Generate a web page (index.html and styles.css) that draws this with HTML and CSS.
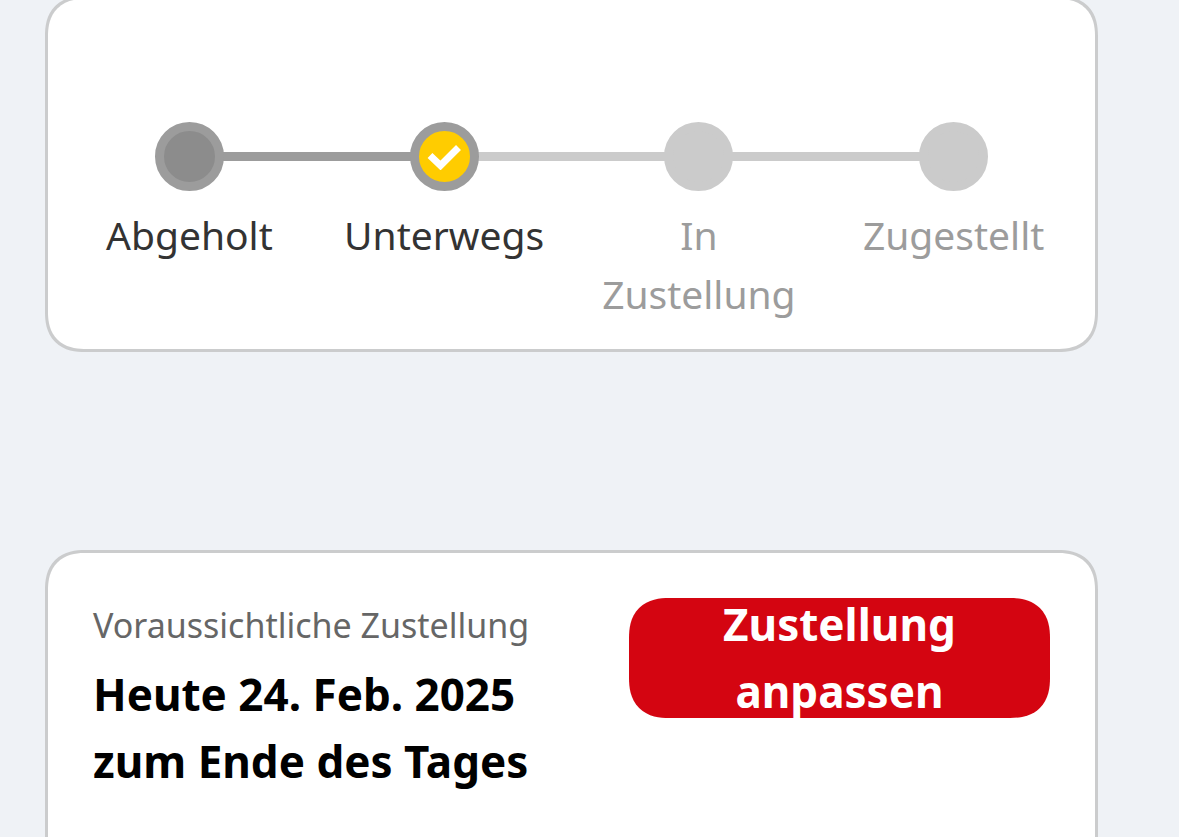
FILE: index.html
```html
<!DOCTYPE html>
<html lang="de">

<head>
  <meta charset="UTF-8">
  <meta name="viewport" content="width=device-width, initial-scale=1.0">
  <title>Sendungsverfolgung</title>
  <link rel="stylesheet" href="styles.css">
</head>

<body>
  <main class="page">
    <section class="card status">
      <ol class="steps">
        <li class="step done">
          <span class="dot"></span>
          <span class="label">Abgeholt</span>
        </li>
        <li class="step current" aria-current="step">
          <span class="dot">
            <svg class="check" viewBox="0 0 34 26" aria-hidden="true">
              <path d="M3 11.5 L13.5 21.5 L31.5 3.5" />
            </svg>
          </span>
          <span class="label">Unterwegs</span>
        </li>
        <li class="step">
          <span class="dot"></span>
          <span class="label">In Zustellung</span>
        </li>
        <li class="step">
          <span class="dot"></span>
          <span class="label">Zugestellt</span>
        </li>
      </ol>
    </section>

    <section class="card delivery">
      <div class="info">
        <p class="caption">Voraussichtliche Zustellung</p>
        <p class="date">Heute 24. Feb. 2025<br>zum Ende des Tages</p>
      </div>
      <button type="button" class="btn">Zustellung anpassen</button>
    </section>
  </main>
</body>

</html>
```

FILE: styles.css
```css
* {
  box-sizing: border-box;
  margin: 0;
  padding: 0;
}

body {
  background-color: #eff2f6;
  font-family: "Noto Sans", "Open Sans", sans-serif;
  overflow-x: hidden;
}

.page {
  display: flex;
  flex-direction: column;
  gap: 198px;
  height: 100vh;
  padding: 0 81px 0 45px;
  overflow: hidden;
}

.card {
  background-color: #fff;
  border: 3px solid #cbcccd;
  border-radius: 40px;
  corner-shape: superellipse(1.25);
}

.status {
  flex-shrink: 0;
  margin-top: -4px;
  padding: 123px 14px 26px;
}

.steps {
  display: grid;
  grid-template-columns: repeat(4, 1fr);
  list-style: none;
}

.step {
  position: relative;
  display: flex;
  flex-direction: column;
  align-items: center;
  padding: 0 20px;
  color: #9c9c9c;
  font-size: 39px;
  line-height: 59px;
  text-align: center;
}

/* Linie zum nächsten Schritt */
.step:not(:last-child)::after {
  content: "";
  position: absolute;
  top: 30px;
  left: 50%;
  width: 100%;
  height: 9px;
  background-color: #cbcbcb;
}

.step.done::after {
  background-color: #9c9c9c;
}

.dot {
  z-index: 1;
  display: flex;
  align-items: center;
  justify-content: center;
  width: 69px;
  height: 69px;
  margin-bottom: 14px;
  border: 9px solid #cbcbcb;
  border-radius: 50%;
  background-color: #cbcbcb;
}

.done .dot {
  border-color: #9c9c9c;
  background-color: #8c8c8c;
}

.current .dot {
  border-color: #9c9c9c;
  background-color: #fc0;
}

.done .label,
.current .label {
  color: #333;
}

.check {
  flex-shrink: 0;
  width: 34px;
  height: 26px;
}

.check path {
  fill: none;
  stroke: #fff;
  stroke-width: 7;
}

.delivery {
  display: flex;
  flex: 1 0 auto;
  align-items: flex-start;
  justify-content: space-between;
  margin-bottom: -60px;
  padding: 45px;
}

.caption {
  padding-top: 2px;
  color: #666;
  font-size: 34px;
  line-height: 50px;
}

.date {
  margin-top: 11px;
  color: #000;
  font-size: 44px;
  font-weight: 700;
  line-height: 67px;
}

.btn {
  display: flex;
  align-items: center;
  justify-content: center;
  width: 44%;
  height: 120px;
  padding: 0 60px;
  border: 0;
  border-radius: 40px;
  corner-shape: superellipse(1.25);
  background-color: #d40511;
  color: #fff;
  font-family: inherit;
  font-size: 44px;
  font-weight: 700;
  line-height: 67px;
  cursor: pointer;
}
```
